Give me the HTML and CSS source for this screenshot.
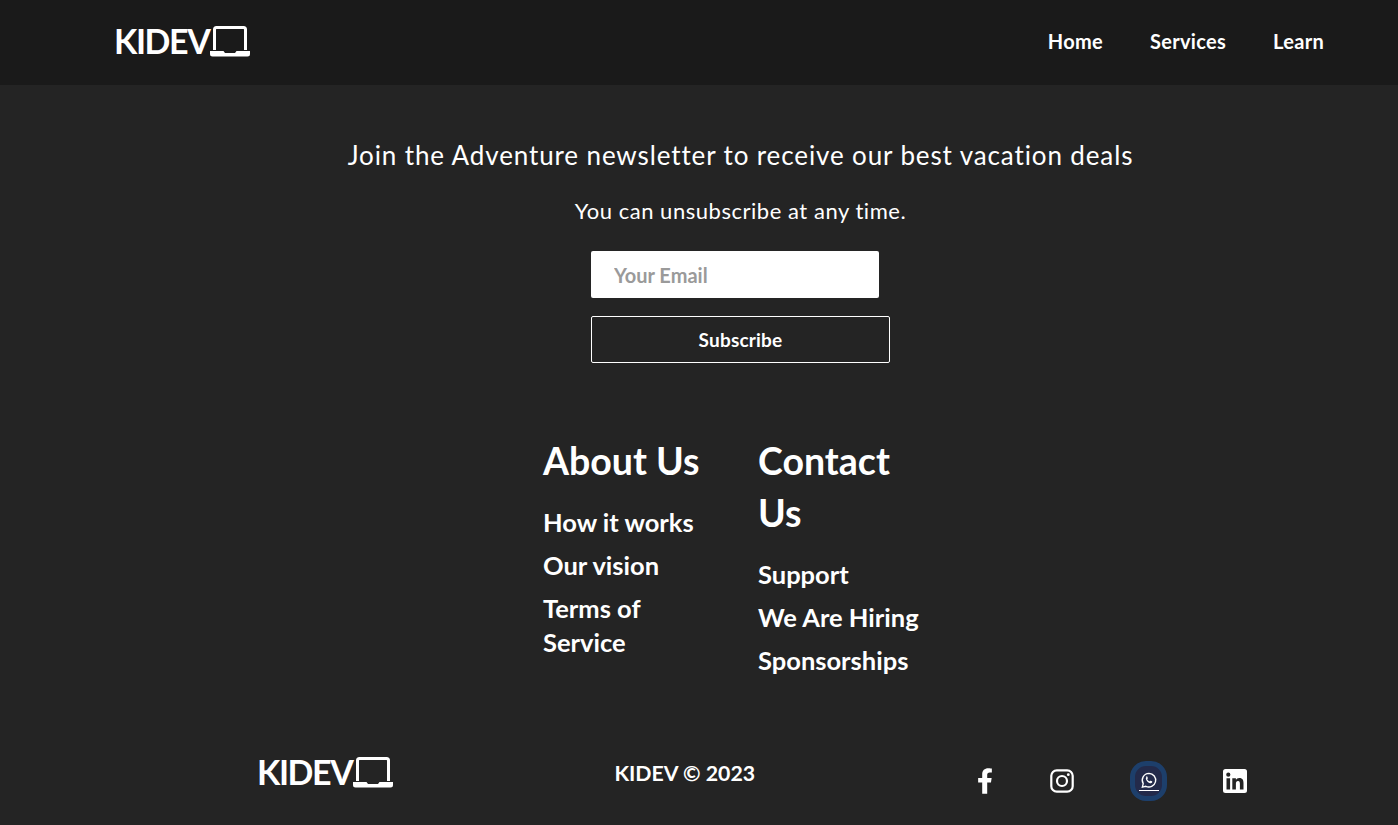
FILE: index.html
```html
<!DOCTYPE html>
<html lang="en">
<head>
    <meta charset="UTF-8">
    <meta name="viewport" content="width=device-width, initial-scale=1.0">
    <title>KIDEV</title>
    <link rel="stylesheet" href="styles.css">
</head>
<body>
    <header class="topbar">
        <a class="logo" href="#">KIDEV<svg class="logo-icon" viewBox="0 0 42 32" aria-hidden="true"><path d="M5.500 24V3.500A2 2 0 0 1 7.500 1.500H34.500A2 2 0 0 1 36.500 3.500V24" fill="none" stroke="currentColor" stroke-width="3"/><path d="M1 25H14.500L16 27H26L27.500 25H41V28A2.500 2.500 0 0 1 38.500 30.500H3.500A2.500 2.500 0 0 1 1 28Z" fill="currentColor"/></svg></a>
        <nav class="nav">
            <a href="#">Home</a>
            <a href="#">Services</a>
            <a href="#">Learn</a>
        </nav>
    </header>

    <section class="newsletter">
        <p class="news-title">Join the Adventure newsletter to receive our best vacation deals</p>
        <p class="news-sub">You can unsubscribe at any time.</p>
        <form class="news-form">
            <input class="email" type="text" placeholder="Your Email">
            <button class="subscribe" type="button">Subscribe</button>
        </form>
    </section>

    <section class="links">
        <div class="link-col">
            <h2>About Us</h2>
            <a href="#">How it works</a>
            <a href="#">Our vision</a>
            <a href="#">Terms of Service</a>
        </div>
        <div class="link-col">
            <h2>Contact Us</h2>
            <a href="#">Support</a>
            <a href="#">We Are Hiring</a>
            <a href="#">Sponsorships</a>
        </div>
    </section>

    <footer class="footer">
        <a class="logo" href="#">KIDEV<svg class="logo-icon" viewBox="0 0 42 32" aria-hidden="true"><path d="M5.500 24V3.500A2 2 0 0 1 7.500 1.500H34.500A2 2 0 0 1 36.500 3.500V24" fill="none" stroke="currentColor" stroke-width="3"/><path d="M1 25H14.500L16 27H26L27.500 25H41V28A2.500 2.500 0 0 1 38.500 30.500H3.500A2.500 2.500 0 0 1 1 28Z" fill="currentColor"/></svg></a>
        <div class="copyright">KIDEV © 2023</div>
        <div class="socials">
            <a class="social social-fb" href="#"><svg viewBox="0 0 320 512"><path fill="currentColor" d="M279 288l14-93h-89v-60c0-25 12-50 52-50h41V6s-37-6-72-6c-73 0-121 44-121 125v70H23v93h81v224h100V288z"/></svg></a>
            <a class="social social-ig" href="#"><svg viewBox="0 0 24 24"><rect x="1.300" y="1.300" width="21.400" height="21.400" rx="5.500" fill="none" stroke="currentColor" stroke-width="2.200"/><circle cx="12" cy="12" r="5" fill="none" stroke="currentColor" stroke-width="2.200"/><circle cx="18.300" cy="5.700" r="1.400" fill="currentColor"/></svg></a>
            <a class="social social-wa" href="#"><svg viewBox="0 0 24 24"><path d="M12 3a8.600 8.600 0 0 0-7.300 13L3.600 20.400 8 19.300A8.600 8.600 0 1 0 12 3Z" fill="none" stroke="currentColor" stroke-width="1.700"/><path d="M8.800 7.600c-.9.700-1 2 -.4 3.500.8 1.800 2.300 3.300 4.200 4 1.500.5 2.700.3 3.300-.6.400-.6.300-1.200-.1-1.400l-1.600-.8c-.4-.2-.7 0-1 .4-.3.400-.6.500-1 .3-1-.5-1.800-1.300-2.300-2.300-.2-.4 0-.7.300-1 .3-.3.400-.6.300-.9l-.7-1.700c-.2-.4-.9-.6-1.300-.5Z" fill="currentColor"/></svg></a>
            <a class="social social-in" href="#"><svg viewBox="0 0 24 24"><path fill="currentColor" fill-rule="evenodd" d="M2.500 0h19A2.500 2.500 0 0 1 24 2.500v19a2.500 2.500 0 0 1-2.500 2.500h-19A2.500 2.500 0 0 1 0 21.500v-19A2.500 2.500 0 0 1 2.500 0ZM3.500 9.300v11.200h3.600V9.300ZM5.300 3.600a2.100 2.100 0 1 0 0 4.200 2.100 2.100 0 0 0 0-4.200ZM9.300 9.300v11.200h3.600v-5.600c0-1.500.3-2.900 2.100-2.900s1.900 1.700 1.900 3v5.500h3.600v-6.100c0-3-.7-5.400-4.200-5.400-1.700 0-2.800.9-3.300 1.800h-.1V9.300Z"/></svg></a>
        </div>
    </footer>
</body>
</html>
```

FILE: styles.css
```css
* {
    box-sizing: border-box;
}

body {
    margin: 0;
    background-color: #242424;
    color: #fff;
    font-family: "Lato", "Noto Sans", sans-serif;
    overflow: hidden;
}

a {
    color: #fff;
    text-decoration: none;
}

.topbar {
    height: 85px;
    background-color: #1a1a1a;
    display: flex;
    align-items: center;
    justify-content: space-between;
    padding: 0 74px 4px 114px;
}

.logo {
    display: flex;
    align-items: center;
    font-size: 34px;
    font-weight: 700;
    letter-spacing: -1.4px;
    line-height: 1;
}

.logo-icon {
    width: 42px;
    height: 32px;
    margin-top: 2px;
}

.nav {
    display: flex;
    gap: 47px;
}

.nav a {
    font-size: 20px;
    font-weight: 700;
    letter-spacing: 0.3px;
}

.newsletter {
    display: flex;
    flex-direction: column;
    align-items: center;
    padding-left: 83px;
}

.news-title {
    margin: 52px 0 0;
    font-size: 26px;
    line-height: 36px;
    letter-spacing: 0.88px;
}

.news-sub {
    margin: 23px 0 0;
    font-size: 22px;
    line-height: 30px;
    letter-spacing: 0.53px;
}

.news-form {
    width: 299px;
    margin-top: 25px;
}

.email {
    display: block;
    width: 288px;
    height: 47px;
    padding: 0 23px;
    border: 0;
    border-radius: 2px;
    background-color: #fff;
    font-family: inherit;
    font-size: 20px;
    font-weight: 700;
}

.email::placeholder {
    color: #9a9a9a;
}

.subscribe {
    display: block;
    width: 299px;
    height: 47px;
    margin-top: 18px;
    border: 1px solid #fff;
    border-radius: 2px;
    background: transparent;
    color: #fff;
    font-family: inherit;
    font-size: 19px;
    font-weight: 700;
    letter-spacing: 0.2px;
}

.links {
    display: flex;
    gap: 51px;
    margin: 72px 0 0 543px;
}

.link-col {
    width: 164px;
    display: flex;
    flex-direction: column;
    align-items: flex-start;
}

.link-col h2 {
    margin: 0 0 18px;
    font-size: 37.5px;
    font-weight: 700;
    line-height: 52px;
}

.link-col a {
    font-size: 25.5px;
    font-weight: 700;
    line-height: 34px;
    margin-bottom: 9px;
}

.footer {
    display: flex;
    align-items: flex-start;
    margin-top: 69px;
    padding-left: 257px;
}

.copyright {
    margin: 4px 0 0 220px;
    font-size: 21.3px;
    font-weight: 700;
    line-height: 28px;
}

.socials {
    display: flex;
    align-items: center;
    margin-left: 222px;
    height: 40px;
    margin-top: 6px;
}

.social {
    display: flex;
    align-items: center;
    justify-content: center;
}

.social-fb {
    width: 16px;
}

.social-fb svg {
    width: 26px;
    height: 26px;
}

.social-ig {
    width: 24px;
    margin-left: 57px;
}

.social-ig svg {
    width: 24px;
    height: 24px;
}

.social-wa {
    width: 37px;
    height: 40px;
    margin-left: 56px;
    border: 5px solid #1d3f6b;
    border-radius: 16px;
    background-color: #232a4a;
}

.social-wa svg {
    width: 20px;
    height: 20px;
    border-bottom: 1px solid #fff;
}

.social-in {
    width: 24px;
    margin-left: 56px;
}

.social-in svg {
    width: 24px;
    height: 24px;
}
```
